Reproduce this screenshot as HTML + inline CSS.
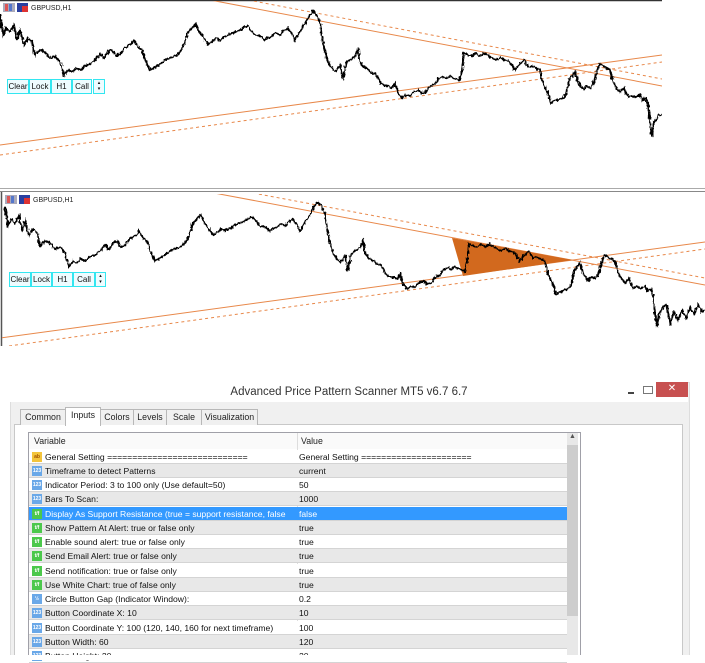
<!DOCTYPE html>
<html><head><meta charset="utf-8"><style>
body{margin:0;width:705px;height:660px;background:#fff;position:relative;overflow:hidden;font-family:"Liberation Sans",sans-serif}
.abs{position:absolute}
.btn{position:absolute;height:13px;border:1px solid #33e6f0;background:#eefcff;font-size:8px;line-height:13px;text-align:center;color:#111;box-sizing:content-box}
.row{position:absolute;left:29px;width:538px;height:14px;font-size:8.6px;line-height:14px;color:#111;border-bottom:1px solid #d4d4d4;box-sizing:border-box}
.row .v{position:absolute;left:270px;top:0}
.row .t{position:absolute;left:16px;top:0;white-space:nowrap}
.ic{position:absolute;left:3px;top:2px;width:10px;height:10px;font-size:5px;line-height:10px;text-align:center;font-weight:bold}
.g{background:#e8e8e8}.w{background:#fff}
.tab{position:absolute;top:409px;height:15px;border:1px solid #b8b8b8;border-bottom:none;background:#f0f0f0;font-size:8.8px;line-height:15px;text-align:center;color:#222}
</style></head><body>
<svg class="abs" style="left:0;top:0" width="705" height="360">
<defs><clipPath id="c1"><rect x="0" y="1" width="662" height="186"/></clipPath><clipPath id="c2"><rect x="2" y="194" width="703" height="152"/></clipPath>
<filter id="n" x="-5%" y="-20%" width="110%" height="140%"><feTurbulence type="fractalNoise" baseFrequency="0.5 0.25" numOctaves="2" seed="3"/><feDisplacementMap in="SourceGraphic" scale="4" xChannelSelector="R" yChannelSelector="G"/></filter></defs>
<line x1="0" y1="0.5" x2="662" y2="0.5" stroke="#333" stroke-width="1.5"/>
<g clip-path="url(#c1)" fill="none">
<line x1="210" y1="0" x2="662" y2="86" stroke="#e8884a" stroke-width="1"/>
<line x1="248" y1="0" x2="662" y2="79" stroke="#e8884a" stroke-width="1" stroke-dasharray="3,3"/>
<line x1="0" y1="145" x2="662" y2="55" stroke="#e8884a" stroke-width="1"/>
<line x1="0" y1="155" x2="662" y2="62" stroke="#e8884a" stroke-width="1" stroke-dasharray="3,3"/>
<g filter="url(#n)"><polyline id="p" stroke="#000" stroke-width="1.9" points="0,15 3,35 6,28 10,32 14,25 17,40 20,30 24,45 28,38 32,42 35,55 40,50 45,52 50,58 55,56 60,62 64,75 68,70 72,72 76,68 80,70 85,66 90,64 95,60 100,54 104,58 108,52 112,50 116,56 120,54 125,48 130,45 134,40 138,47 142,50 146,62 150,70 155,67 160,64 165,60 170,58 175,56 180,52 184,45 188,32 192,28 196,24 200,33 204,38 208,44 212,42 216,38 220,40 225,37 230,34 235,32 240,30 244,27 248,26 252,32 256,35 260,36 264,40 268,38 272,36 276,33 280,35 284,30 288,28 292,34 295,40 298,35 301,30 305,24 309,16 313,11 317,16 320,22 322,38 325,52 328,62 332,68 336,71 340,65 343,80 346,63 350,60 355,57 358,50 360,62 364,67 368,70 372,73 376,74 380,82 384,86 388,86 392,88 395,83 398,93 402,98 406,95 410,96 414,92 418,90 422,93 426,92 430,86 434,85 438,79 442,77 446,78 450,76 456,79 460,80 462,70 464,53 468,55 472,56 476,53 480,56 484,53 488,55 492,58 496,60 500,57 504,60 508,61 512,65 515,70 518,66 521,63 524,60 528,67 532,66 536,68 540,70 542,80 545,88 548,93 551,103 555,101 559,99 563,98 566,94 569,80 572,76 575,72 578,82 581,87 584,89 587,86 590,88 594,82 597,70 600,64 603,66 607,68 610,70 613,82 616,87 620,92 624,88 628,97 632,96 636,97 640,95 643,100 646,98 648,104 650,122 652,136 654,122 656,120 658,116 662,114"/></g>
</g>
<rect x="3" y="3" width="12" height="9" fill="#aab" /><rect x="5" y="4" width="3" height="7" fill="#d55"/><rect x="9" y="4" width="3" height="7" fill="#57c"/>
<rect x="17" y="3" width="11" height="9" fill="#2a3fa0"/><rect x="22" y="6" width="6" height="6" fill="#d33"/>
<text x="31" y="10" font-size="7" font-family="Liberation Sans" fill="#222">GBPUSD,H1</text>
<line x1="0" y1="188.5" x2="705" y2="188.5" stroke="#aaa" stroke-width="1"/>
<line x1="0" y1="191.5" x2="705" y2="191.5" stroke="#888" stroke-width="1"/>
<line x1="1.5" y1="192" x2="1.5" y2="346" stroke="#555" stroke-width="1.5"/>
<g clip-path="url(#c2)" fill="none">
<line x1="214" y1="193" x2="705" y2="285" stroke="#e8884a" stroke-width="1"/>
<line x1="253" y1="193" x2="705" y2="278" stroke="#e8884a" stroke-width="1" stroke-dasharray="3,3"/>
<line x1="0" y1="338" x2="705" y2="242" stroke="#e8884a" stroke-width="1"/>
<line x1="9" y1="346" x2="705" y2="249" stroke="#e8884a" stroke-width="1" stroke-dasharray="3,3"/>
<polygon points="452,238 463,276 573,260" fill="#d2691e" stroke="none"/>
<g filter="url(#n)"><use href="#p" transform="translate(5,191)"/>
<polyline stroke="#000" stroke-width="1.9" points="667,305 670,325 674,312 678,320 682,310 686,318 690,308 694,314 698,304 702,312 705,310"/></g>
</g>
<rect x="5" y="195" width="12" height="9" fill="#aab"/><rect x="7" y="196" width="3" height="7" fill="#d55"/><rect x="11" y="196" width="3" height="7" fill="#57c"/>
<rect x="19" y="195" width="11" height="9" fill="#2a3fa0"/><rect x="24" y="198" width="6" height="6" fill="#d33"/>
<text x="33" y="202" font-size="7" font-family="Liberation Sans" fill="#222">GBPUSD,H1</text>
</svg>
<div class="btn" style="left:7px;top:79px;width:20px">Clear</div>
<div class="btn" style="left:29px;top:79px;width:20px">Lock</div>
<div class="btn" style="left:51px;top:79px;width:19px">H1</div>
<div class="btn" style="left:72px;top:79px;width:18px">Call</div>
<div class="btn" style="left:93px;top:79px;width:10px;font-size:5px;line-height:6px">▴<br>▾</div>
<div class="btn" style="left:9px;top:272px;width:20px">Clear</div>
<div class="btn" style="left:31px;top:272px;width:19px">Lock</div>
<div class="btn" style="left:52px;top:272px;width:19px">H1</div>
<div class="btn" style="left:73px;top:272px;width:20px">Call</div>
<div class="btn" style="left:95px;top:272px;width:9px;font-size:5px;line-height:6px">▴<br>▾</div>

<div class="abs" style="left:10px;top:382px;width:678px;height:273px;background:#f0f0f0;border:1px solid #ddd"></div>
<div class="abs" style="left:10px;top:382px;width:678px;height:20px;background:#fff"></div>
<div class="abs" style="left:10px;top:386px;width:678px;text-align:center;font-size:11.5px;color:#333">Advanced Price Pattern Scanner MT5 v6.7 6.7</div>
<div class="abs" style="left:628px;top:392px;width:6px;height:2px;background:#444"></div>
<div class="abs" style="left:643px;top:386px;width:8px;height:6px;border:1px solid #777"></div>
<div class="abs" style="left:656px;top:382px;width:32px;height:15px;background:#c75050;color:#fff;font-size:10px;text-align:center;line-height:14px">✕</div>
<div class="abs" style="left:14px;top:424px;width:667px;height:231px;background:#fff;border:1px solid #c8c8c8"></div>
<div class="tab" style="left:20px;width:44px">Common</div>
<div class="tab" style="left:65px;width:34px;top:407px;height:18px;background:#fff">Inputs</div>
<div class="tab" style="left:100px;width:32px">Colors</div>
<div class="tab" style="left:133px;width:32px">Levels</div>
<div class="tab" style="left:166px;width:34px">Scale</div>
<div class="tab" style="left:201px;width:55px">Visualization</div>
<div class="abs" style="left:28px;top:432px;width:551px;height:225px;border:1px solid #a0a0a8;background:#fff"></div>
<div class="abs" style="left:29px;top:433px;width:538px;height:16px;background:#fafafa;font-size:8.8px;line-height:16px;color:#222"><span style="position:absolute;left:5px">Variable</span><span style="position:absolute;left:272px">Value</span></div>
<div class="abs" style="left:297px;top:433px;width:1px;height:222px;background:#ddd"></div>
<div class="abs" style="left:567px;top:433px;width:11px;height:222px;background:#e8e8e8"></div>
<div class="abs" style="left:567px;top:445px;width:11px;height:171px;background:#cdcdcd"></div>
<div class="abs" style="left:567px;top:433px;width:11px;height:12px;font-size:7px;text-align:center;color:#555">▲</div>

<div class="row w" style="top:450px"><div class="ic" style="background:#f3c43c;color:#a05000">ab</div><span class="t">General Setting ============================</span><span class="v">General Setting ======================</span></div>
<div class="row g" style="top:464px"><div class="ic" style="background:#6aa8e8;color:#fff">123</div><span class="t">Timeframe to detect Patterns</span><span class="v">current</span></div>
<div class="row w" style="top:478px"><div class="ic" style="background:#6aa8e8;color:#fff">123</div><span class="t">Indicator Period: 3 to 100 only (Use default=50)</span><span class="v">50</span></div>
<div class="row g" style="top:492px"><div class="ic" style="background:#6aa8e8;color:#fff">123</div><span class="t">Bars To Scan:</span><span class="v">1000</span></div>
<div class="row" style="top:507px;background:#3399ff;color:#fff"><div class="ic" style="background:#4cc84c;color:#fff">t/f</div><span class="t">Display As Support Resistance (true = support resistance, false</span><span class="v">false</span></div>
<div class="row g" style="top:521px"><div class="ic" style="background:#4cc84c;color:#fff">t/f</div><span class="t">Show Pattern At Alert: true or false only</span><span class="v">true</span></div>
<div class="row w" style="top:535px"><div class="ic" style="background:#4cc84c;color:#fff">t/f</div><span class="t">Enable sound alert: true or false only</span><span class="v">true</span></div>
<div class="row g" style="top:549px"><div class="ic" style="background:#4cc84c;color:#fff">t/f</div><span class="t">Send Email Alert: true or false only</span><span class="v">true</span></div>
<div class="row w" style="top:564px"><div class="ic" style="background:#4cc84c;color:#fff">t/f</div><span class="t">Send notification: true or false only</span><span class="v">true</span></div>
<div class="row g" style="top:578px"><div class="ic" style="background:#4cc84c;color:#fff">t/f</div><span class="t">Use White Chart: true of false only</span><span class="v">true</span></div>
<div class="row w" style="top:592px"><div class="ic" style="background:#6aa8e8;color:#fff">½</div><span class="t">Circle Button Gap (Indicator Window):</span><span class="v">0.2</span></div>
<div class="row g" style="top:606px"><div class="ic" style="background:#6aa8e8;color:#fff">123</div><span class="t">Button Coordinate X: 10</span><span class="v">10</span></div>
<div class="row w" style="top:621px"><div class="ic" style="background:#6aa8e8;color:#fff">123</div><span class="t">Button Coordinate Y: 100 (120, 140, 160 for next timeframe)</span><span class="v">100</span></div>
<div class="row g" style="top:635px"><div class="ic" style="background:#6aa8e8;color:#fff">123</div><span class="t">Button Width: 60</span><span class="v">120</span></div>
<div class="row w" style="top:649px"><div class="ic" style="background:#6aa8e8;color:#fff">123</div><span class="t">Button Height: 20</span><span class="v">20</span></div>
<div class="abs" style="left:0;top:655px;width:705px;height:5px;background:#fff"></div>
</body></html>
